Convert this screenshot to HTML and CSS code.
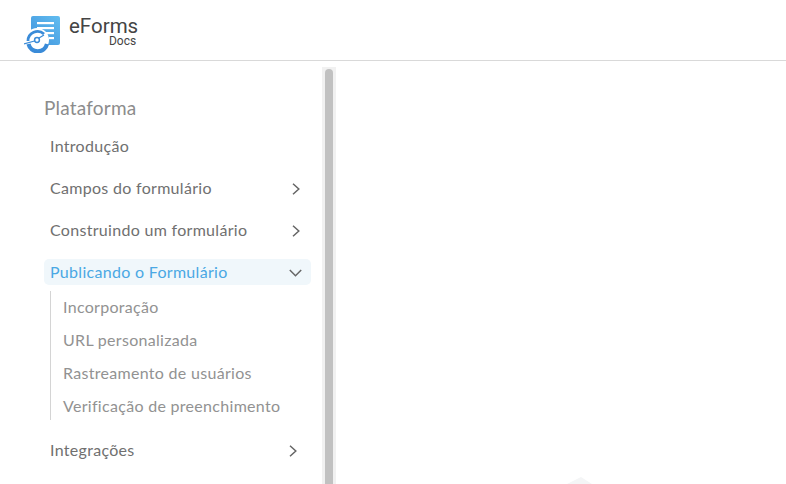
FILE: index.html
```html
<!DOCTYPE html>
<html lang="pt-BR">
<head>
<meta charset="utf-8">
<title>eForms Docs</title>
<link rel="stylesheet" href="styles.css">
</head>
<body>
<header class="topbar">
  <svg class="logo" width="40" height="38" viewBox="0 0 40 38" aria-hidden="true">
    <defs>
      <linearGradient id="sheet" x1="1" y1="0" x2="0" y2="1">
        <stop offset="0" stop-color="#62bdf0"/>
        <stop offset="1" stop-color="#3f92dc"/>
      </linearGradient>
    </defs>
    <rect x="7" y="1" width="29" height="29" rx="2" fill="url(#sheet)"/>
    <rect x="13" y="7" width="17" height="2.200" fill="#fff"/>
    <rect x="13" y="12" width="17" height="2.200" fill="#fff"/>
    <rect x="20" y="17" width="10" height="2.200" fill="#fff"/>
    <rect x="25" y="22" width="5" height="2.200" fill="#fff"/>
    <circle cx="13" cy="25" r="12" fill="#fff"/>
    <path d="M4 26 A9.500 9.500 0 0 1 20 19" fill="none" stroke="#3a8bd8" stroke-width="2.800"/>
    <path d="M4.500 29 A9.500 9.500 0 0 0 23 29" fill="none" stroke="#3a8bd8" stroke-width="4.200"/>
    <circle cx="13" cy="25" r="2.400" fill="none" stroke="#3a8bd8" stroke-width="1.500"/>
    <path d="M0 29 L10.500 26 M15 23 L20 20" stroke="#3a8bd8" stroke-width="1.300"/>
  </svg>
  <div class="brand">
    <span class="brand-name">eForms</span>
    <span class="brand-sub">Docs</span>
  </div>
</header>
<main class="layout">
  <nav class="sidebar">
    <h2 class="section">Plataforma</h2>
    <ul class="menu">
      <li class="item"><span>Introdução</span></li>
      <li class="item"><span>Campos do formulário</span>
        <svg class="chev" width="8" height="12" viewBox="0 0 8 12"><path d="M1 .8 L6.800 6 L1 11.200"/></svg></li>
      <li class="item"><span>Construindo um formulário</span>
        <svg class="chev" width="8" height="12" viewBox="0 0 8 12"><path d="M1 .8 L6.800 6 L1 11.200"/></svg></li>
      <li class="item active"><span>Publicando o Formulário</span>
        <svg class="chev-down" width="13" height="8" viewBox="0 0 13 8"><path d="M.8 1 L6.500 6.800 L12.200 1"/></svg></li>
    </ul>
    <ul class="submenu">
      <li>Incorporação</li>
      <li>URL personalizada</li>
      <li>Rastreamento de usuários</li>
      <li>Verificação de preenchimento</li>
    </ul>
    <ul class="menu">
      <li class="item last"><span>Integrações</span>
        <svg class="chev" width="8" height="12" viewBox="0 0 8 12"><path d="M1 .8 L6.800 6 L1 11.200"/></svg></li>
    </ul>
  </nav>
  <div class="scrollbar"><div class="thumb"></div></div>
  <section class="content"></section>
</main>
<svg class="mark" width="26" height="7" viewBox="0 0 26 7" aria-hidden="true"><path d="M0 7 L14 0 L25 7 Z"/></svg>
</body>
</html>
```
FILE: styles.css
```css
* { box-sizing: border-box; }
html, body { height: 100%; }
body {
  margin: 0;
  height: 484px;
  overflow: hidden;
  background: #fff;
  font-family: "Lato", "Open Sans", sans-serif;
  color: #666;
  display: flex;
  flex-direction: column;
  position: relative;
}
ul { list-style: none; margin: 0; padding: 0; }

.topbar {
  height: 61px;
  flex: none;
  border-bottom: 1px solid #d9d9d9;
  display: flex;
  align-items: flex-start;
  padding: 15px 0 0 24px;
  gap: 5px;
}
.logo { display: block; }
.brand { display: flex; flex-direction: column; align-items: flex-end; font-family: "Roboto", sans-serif; color: #444; }
.brand-name { font-size: 20.500px; line-height: 22px; }
.brand-sub { font-size: 12px; line-height: 14px; margin-top: -3px; margin-right: 2px; }

.layout { flex: 1; display: flex; min-height: 0; overflow: hidden; }
.sidebar { width: 322px; flex: none; padding: 35px 11px 0 44px; overflow: hidden; }
.section { margin: 0 0 13px; font-size: 19px; line-height: 24px; font-weight: 400; color: #8c8c8c; letter-spacing: 0.2px; }
.item {
  height: 26px;
  margin-bottom: 16px;
  padding: 0 8px 0 6px;
  display: flex;
  align-items: center;
  justify-content: space-between;
  font-size: 16px;
  letter-spacing: 0.3px;
  color: #707070;
}
.item span { margin-bottom: 2px; }
.chev, .chev-down { fill: none; stroke: #666; stroke-width: 1.500; flex: none; margin-top: 2px; }
.chev { margin-right: 3px; }
.chev-down { margin-right: 1px; }
.active { background: #f0f7fb; border-radius: 5px; color: #4aa8e4; margin-bottom: 6px; }
.last { margin: 17px 0 0; }
.last .chev { margin-right: 6px; }

.submenu { margin-left: 6px; border-left: 1px solid #d4d4d4; padding-left: 12px; }
.submenu li { height: 33px; line-height: 31px; font-size: 16px; letter-spacing: 0.3px; color: #929292; white-space: nowrap; }
.submenu li:last-child { height: 30px; }

.scrollbar { width: 14px; flex: none; margin-top: 6px; background: #f1f1f1; padding: 2px 3px 0; }
.thumb { height: 100%; background: #c1c1c1; border-radius: 4px 4px 0 0; }
.content { flex: 1; }

.mark { position: absolute; left: 567px; top: 477px; fill: #f4f5f6; }
```
